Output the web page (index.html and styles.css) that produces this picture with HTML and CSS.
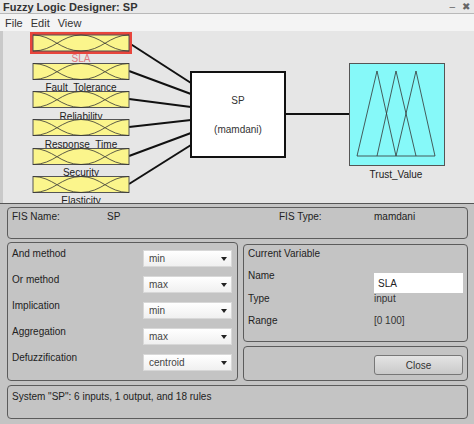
FILE: index.html
```html
<!DOCTYPE html>
<html>
<head>
	<title>Fuzzy Logic Designer: SP</title>
	<link rel="stylesheet" href="styles.css">
</head>
<body>
	<div class="window">
		<div class="titlebar">
			<span class="title">Fuzzy Logic Designer: SP</span>
			<span class="win-btns"><span class="min">&ndash;</span><span class="close-x">&#10006;</span></span>
		</div>
		<div class="menubar">
			<span>File</span><span>Edit</span><span>View</span>
		</div>
		<div class="canvas">
			<svg class="diagram" width="474" height="172" viewBox="0 31 474 172">
				<defs>
					<g id="mf">
						<path d="M0 0 C20 0 27 16 48 16" />
						<path d="M0 16 C21 16 28 0 48 0 C68 0 75 16 96 16" />
						<path d="M48 16 C69 16 76 0 96 0" />
					</g>
				</defs>
				<!-- wires -->
				<g class="wire">
					<line x1="129" y1="43" x2="191" y2="83" />
					<line x1="129" y1="71" x2="191" y2="94" />
					<line x1="129" y1="99" x2="191" y2="107" />
					<line x1="129" y1="127" x2="191" y2="120" />
					<line x1="129" y1="156" x2="191" y2="133" />
					<line x1="129" y1="184" x2="191" y2="145" />
					<line x1="285" y1="114" x2="349" y2="114" />
				</g>
				<!-- inputs -->
				<rect x="31.5" y="33.5" width="99" height="19" class="sel" />
				<rect x="33" y="35" width="96" height="16" class="inbox" />
				<use href="#mf" x="33" y="35" class="curve" />
				<text x="81" y="62" class="lbl lbl-sel">SLA</text>

				<rect x="33" y="63.5" width="96" height="16" class="inbox" />
				<use href="#mf" x="33" y="63.5" class="curve" />
				<text x="81" y="91" class="lbl">Fault_Tolerance</text>

				<rect x="33" y="91.5" width="96" height="16" class="inbox" />
				<use href="#mf" x="33" y="91.5" class="curve" />
				<text x="81" y="120" class="lbl">Reliability</text>

				<rect x="33" y="119.5" width="96" height="16" class="inbox" />
				<use href="#mf" x="33" y="119.5" class="curve" />
				<text x="81" y="148" class="lbl">Response_Time</text>

				<rect x="33" y="148.5" width="96" height="16" class="inbox" />
				<use href="#mf" x="33" y="148.5" class="curve" />
				<text x="81" y="176" class="lbl">Security</text>

				<rect x="33" y="176.5" width="96" height="16" class="inbox" />
				<use href="#mf" x="33" y="176.5" class="curve" />
				<text x="81" y="204" class="lbl">Elasticity</text>

				<!-- rule block -->
				<rect x="191" y="72" width="94" height="85" class="sysbox" />
				<text x="238" y="104" class="lbl sys">SP</text>
				<text x="238" y="133" class="lbl sys">(mamdani)</text>

				<!-- output -->
				<rect x="349.5" y="63.5" width="95" height="102" class="outbox" />
				<g class="tri">
					<polyline points="357,156 377,71 396,156" />
					<polyline points="377,156 396,71 416,156" />
					<polyline points="396,156 416,71 435,156" />
					<line x1="357" y1="156" x2="435" y2="156" />
				</g>
				<text x="396" y="178" class="lbl">Trust_Value</text>
			</svg>
		</div>
		<div class="panel">
			<div class="box fis">
				<span class="fis-label">FIS Name:</span>
				<span class="fis-val">SP</span>
				<span class="fis-label">FIS Type:</span>
				<span>mamdani</span>
			</div>
			<div class="middle">
				<div class="box methods">
					<div class="row"><span class="rlabel">And method</span><div class="select"><span>min</span><span class="arrow"></span></div></div>
					<div class="row"><span class="rlabel">Or method</span><div class="select"><span>max</span><span class="arrow"></span></div></div>
					<div class="row"><span class="rlabel">Implication</span><div class="select"><span>min</span><span class="arrow"></span></div></div>
					<div class="row"><span class="rlabel">Aggregation</span><div class="select"><span>max</span><span class="arrow"></span></div></div>
					<div class="row"><span class="rlabel">Defuzzification</span><div class="select"><span>centroid</span><span class="arrow"></span></div></div>
				</div>
				<div class="side">
					<div class="box current">
						<div class="cv-title">Current Variable</div>
						<div class="cv-row name-row"><span class="cv-label">Name</span><div class="name-input">SLA</div></div>
						<div class="cv-row"><span class="cv-label">Type</span><span class="cv-val">input</span></div>
						<div class="cv-row"><span class="cv-label">Range</span><span class="cv-val">[0 100]</span></div>
					</div>
					<div class="box actions">
						<div class="btn">Close</div>
					</div>
				</div>
			</div>
			<div class="box status">System "SP": 6 inputs, 1 output, and 18 rules</div>
		</div>
	</div>
</body>
</html>
```

FILE: styles.css
```css
body {
	margin: 0;
	padding: 0;
	font-family: "Liberation Sans", Arial, sans-serif;
	font-size: 10px;
	color: #222;
	background-color: #c4c4c4;
}

.window {
	width: 474px;
	height: 424px;
	display: flex;
	flex-direction: column;
	overflow: hidden;
}

.titlebar {
	height: 13px;
	background-color: #e9e9e9;
	border-bottom: 1px solid #b9b9b9;
	display: flex;
	align-items: center;
	justify-content: space-between;
	padding: 0 4px 0 3px;
}

.title {
	font-weight: bold;
	font-size: 11px;
	color: #333;
}

.win-btns {
	display: flex;
	gap: 7px;
	color: #666;
	font-size: 10px;
}

.menubar {
	height: 17px;
	background-color: #f4f4f4;
	display: flex;
	align-items: center;
	gap: 8px;
	padding-left: 5px;
	font-size: 11px;
	color: #333;
}

.canvas {
	height: 172px;
	background-color: #e6e6e6;
	border-left: 3px solid #c9c9c9;
}

.diagram {
	display: block;
	margin-left: -3px;
}

.wire line {
	stroke: #111;
	stroke-width: 2;
}

.sel {
	fill: none;
	stroke: #e8453c;
	stroke-width: 3;
}

.inbox {
	fill: #fbf58c;
	stroke: #555;
	stroke-width: 1;
}

.curve {
	fill: none;
	stroke: #333;
	stroke-width: 0.8;
}

.lbl {
	font-family: "Liberation Sans", Arial, sans-serif;
	font-size: 10px;
	fill: #222;
	text-anchor: middle;
}

.lbl-sel {
	fill: #e07a80;
}

.sys {
	fill: #333;
}

.sysbox {
	fill: #fff;
	stroke: #111;
	stroke-width: 2;
}

.outbox {
	fill: #86f9f9;
	stroke: #555;
	stroke-width: 1;
}

.tri polyline, .tri line {
	fill: none;
	stroke: #333;
	stroke-width: 0.8;
}

.panel {
	flex: 1;
	background-color: #c4c4c4;
	border-top: 1px solid #555;
	padding: 3px 6px 0 7px;
	display: flex;
	flex-direction: column;
	gap: 3px;
}

.box {
	border: 1px solid #5c5c5c;
	border-radius: 4px;
	box-sizing: border-box;
}

.fis {
	height: 32px;
	display: flex;
	align-items: flex-start;
	padding: 3px 0 0 4px;
}

.fis span {
	flex-shrink: 0;
}

.fis-label {
	width: 95px;
}

.fis-val {
	width: 172px;
}

.middle {
	display: flex;
	gap: 5px;
	height: 139px;
}

.methods {
	width: 231px;
	padding: 7px 5px 0 4px;
	display: flex;
	flex-direction: column;
	gap: 9px;
}

.row {
	display: flex;
	justify-content: space-between;
	align-items: flex-start;
	height: 17px;
}

.rlabel {
	margin-top: -2px;
}

.select {
	width: 89px;
	height: 17px;
	box-sizing: border-box;
	background: linear-gradient(#ffffff, #f0f0f0);
	border: 1px solid #d8d8d8;
	display: flex;
	align-items: center;
	justify-content: space-between;
	padding: 0 4px 0 5px;
	color: #444;
}

.arrow {
	width: 0;
	height: 0;
	border-left: 3px solid transparent;
	border-right: 3px solid transparent;
	border-top: 4px solid #222;
}

.side {
	flex: 1;
	display: flex;
	flex-direction: column;
	gap: 4px;
	padding-top: 2px;
}

.current {
	height: 98px;
	padding: 3px 4px 0 4px;
}

.cv-title {
	height: 25px;
}

.cv-row {
	display: flex;
	align-items: flex-start;
	height: 22px;
}

.name-row {
	height: 20px;
}

.cv-label {
	width: 126px;
}

.name-row .cv-label {
	margin-top: -3px;
}

.name-input {
	width: 89px;
	height: 20px;
	box-sizing: border-box;
	background-color: #fff;
	padding: 5px 0 0 4px;
}

.cv-val {
	color: #333;
}

.actions {
	flex: 1;
	display: flex;
	justify-content: flex-end;
	align-items: flex-end;
	padding: 0 4px 5px 0;
}

.btn {
	width: 89px;
	height: 20px;
	box-sizing: border-box;
	border: 1px solid #777;
	border-radius: 3px;
	background: linear-gradient(#e4e4e4, #c9c9c9);
	display: flex;
	align-items: center;
	justify-content: center;
	color: #333;
}

.status {
	height: 34px;
	padding: 5px 0 0 4px;
	margin-top: 1px;
}
```
